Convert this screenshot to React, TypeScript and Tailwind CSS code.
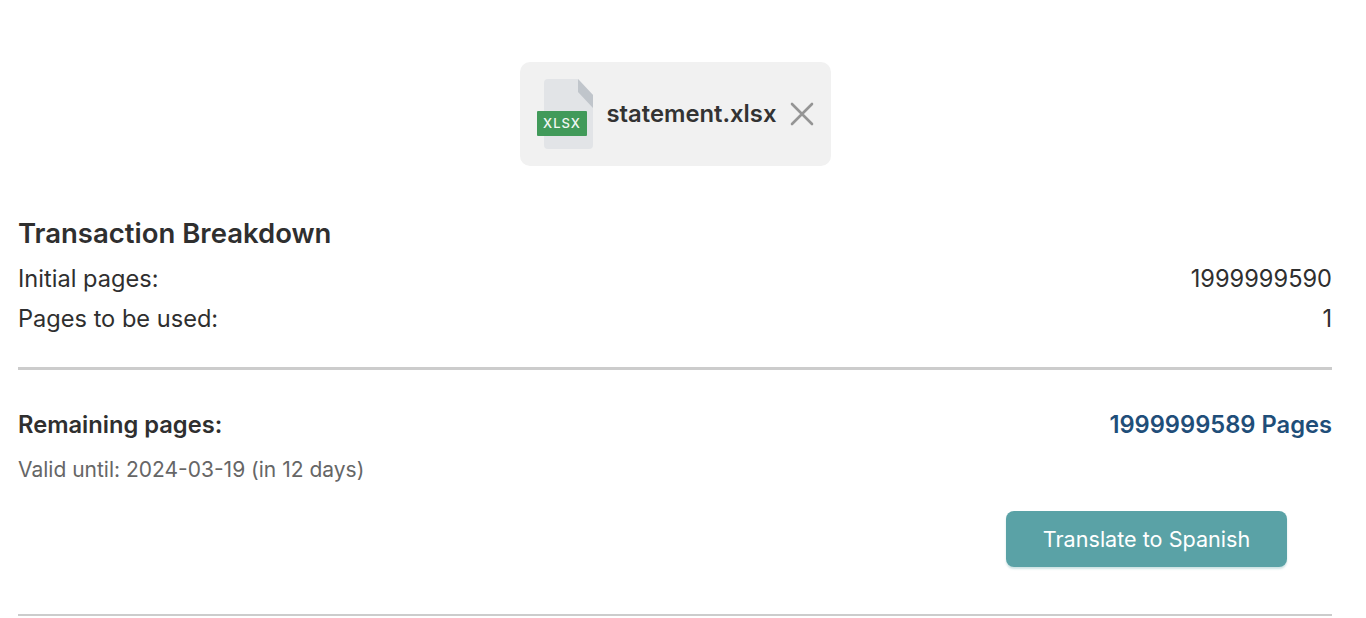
export default function App() {
  return (
    <div className="h-[618px] overflow-hidden bg-white font-['Inter',sans-serif] text-[#2f2f2f]">
      <div className="pl-[18px] pr-[34px] pt-[62px]">
        {/* File chip */}
        <div className="flex justify-center">
          <div className="flex h-[104px] w-[311px] items-center rounded-[10px] bg-[#f1f1f1] pl-[17px]">
            <svg width="57" height="70" viewBox="0 0 57 70" className="mt-[-1px] shrink-0">
              <path d="M7 4a4 4 0 0 1 4-4h30l15 16v50a4 4 0 0 1-4 4H11a4 4 0 0 1-4-4z" fill="#e2e4e7" />
              <path d="M41 0l15 16v13L41 13z" fill="#c0c5cb" />
              <rect x="0" y="32" width="50" height="25" rx="1" fill="#419a5a" />
              <text x="25" y="49" textAnchor="middle" fontSize="13" fontWeight="500" letterSpacing="1" fill="#f2f7f3" fontFamily="Inter, sans-serif">XLSX</text>
            </svg>
            <span className="ml-[13px] text-[23.8px] font-semibold text-[#333333]">statement.xlsx</span>
            <svg width="24" height="24" viewBox="0 0 24 24" className="ml-[14px] shrink-0" stroke="#959595" strokeWidth="2.6" strokeLinecap="round">
              <path d="M2 2l20 20M22 2L2 22" />
            </svg>
          </div>
        </div>

        {/* Breakdown */}
        <h2 className="mt-[47px] text-[27.5px] leading-[40px] font-semibold">Transaction Breakdown</h2>
        <div className="mt-[6px] flex h-[40px] items-center justify-between text-[23.6px]">
          <span>Initial pages:</span>
          <span>1999999590</span>
        </div>
        <div className="flex h-[40px] items-center justify-between text-[23.6px]">
          <span>Pages to be used:</span>
          <span>1</span>
        </div>
        <div className="mt-[28px] h-[3px] bg-[#cccccc]" />

        <div className="mt-[35px] flex h-[40px] items-center justify-between text-[23.7px] font-semibold">
          <span>Remaining pages:</span>
          <span className="text-[#1f4e79]">1999999589 Pages</span>
        </div>
        <p className="mt-[5px] text-[21px] leading-[40px] text-[#666666]">Valid until: 2024-03-19 (in 12 days)</p>

        <div className="mt-[21px] flex justify-end pr-[45px]">
          <button className="h-[56px] w-[281px] rounded-[8px] bg-[#5aa2a6] text-[21.6px] text-white shadow-[0_2px_2px_rgba(90,162,166,0.3)]">
            Translate to Spanish
          </button>
        </div>

        <div className="mt-[47px] h-[2px] bg-[#cccccc]" />
      </div>
    </div>
  );
}
